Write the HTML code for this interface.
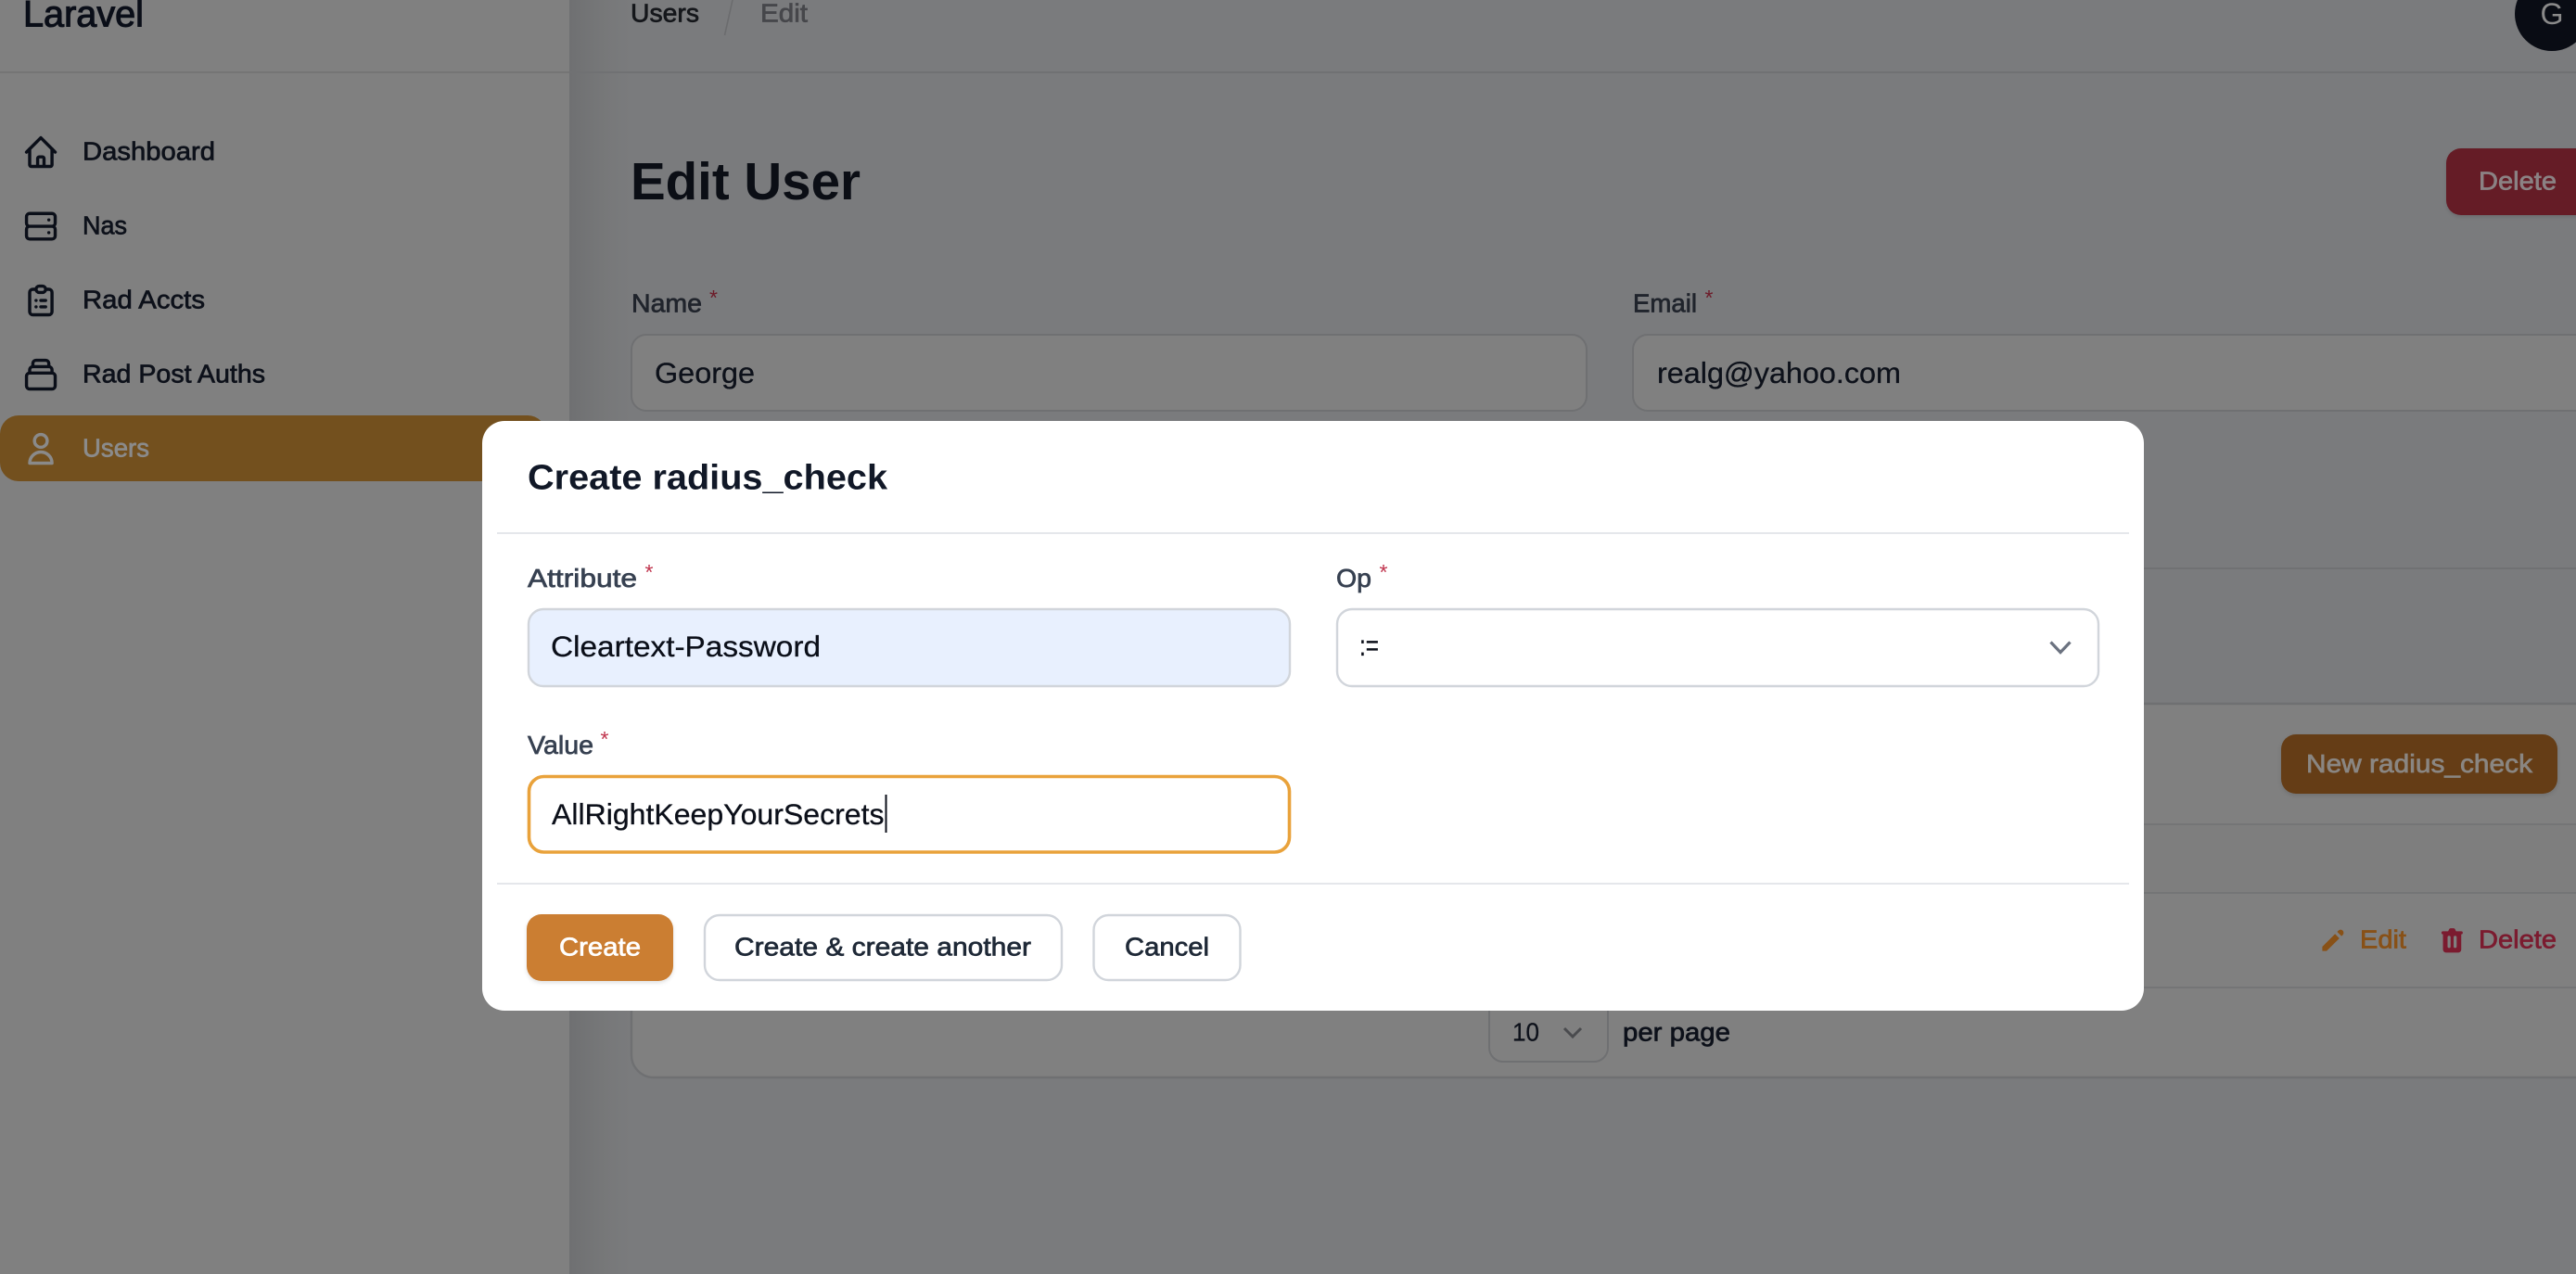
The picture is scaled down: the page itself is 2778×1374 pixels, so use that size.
<!DOCTYPE html>
<html lang="en">
<head>
<meta charset="utf-8">
<title>Edit User</title>
<style>
html,body{margin:0;padding:0;width:2778px;height:1374px;overflow:hidden;background:#7a7b7d}
svg{display:block}
text{font-family:"Liberation Sans",sans-serif;white-space:pre}
.m{stroke-width:.7px;stroke:currentColor}
.r{stroke-width:.3px;stroke:currentColor}
</style>
</head>
<body>
<svg xmlns="http://www.w3.org/2000/svg" width="2778" height="1374" viewBox="0 0 2778 1374">
<defs>
<linearGradient id="sh" x1="0" x2="1" y1="0" y2="0">
<stop offset="0" stop-color="#6f7072"/><stop offset=".6" stop-color="#777879"/><stop offset="1" stop-color="#7a7b7d"/>
</linearGradient>
<filter id="btn" x="-10%" y="-20%" width="120%" height="150%"><feDropShadow dx="0" dy="2" stdDeviation="2" flood-color="#000" flood-opacity=".12"/></filter>
</defs>

<!-- page -->
<rect width="2778" height="1374" fill="#7a7b7d"/>
<rect x="614" width="66" height="1374" fill="url(#sh)"/>

<!-- sidebar -->
<rect width="614" height="1374" fill="#808080"/>
<rect y="77" width="614" height="2" fill="#757575"/>
<rect x="614" y="77" width="2164" height="2" fill="#707173"/>
<text x="25" y="28.5" font-size="40" textLength="130" lengthAdjust="spacingAndGlyphs" fill="#0a0e18" stroke="#0a0e18" stroke-width="1.1">Laravel</text>

<rect x="0" y="448" width="589" height="71" rx="20" fill="#73501e"/>

<g fill="none" stroke="#0b0f19" stroke-width="2" stroke-linecap="round" stroke-linejoin="round">
<path transform="translate(23.4 143.4) scale(1.72)" d="M3 12l2-2m0 0l7-7 7 7M5 10v10a1 1 0 001 1h3m10-11l2 2m-2-2v10a1 1 0 01-1 1h-3m-6 0a1 1 0 001-1v-4a1 1 0 011-1h2a1 1 0 011 1v4a1 1 0 001 1m-6 0h6"/>
<path transform="translate(23.4 223.4) scale(1.72)" d="M5 12h14M5 12a2 2 0 01-2-2V6a2 2 0 012-2h14a2 2 0 012 2v4a2 2 0 01-2 2M5 12a2 2 0 00-2 2v4a2 2 0 002 2h14a2 2 0 002-2v-4a2 2 0 00-2-2m-2-4h.01M17 16h.01"/>
<path transform="translate(23.4 303.4) scale(1.72)" d="M9 5H7a2 2 0 00-2 2v12a2 2 0 002 2h10a2 2 0 002-2V7a2 2 0 00-2-2h-2M9 5a2 2 0 002 2h2a2 2 0 002-2M9 5a2 2 0 012-2h2a2 2 0 012 2m-3 7h3m-3 4h3m-6-4h.01M9 16h.01"/>
<path transform="translate(23.4 383.4) scale(1.72)" d="M19 11H5m14 0a2 2 0 012 2v6a2 2 0 01-2 2H5a2 2 0 01-2-2v-6a2 2 0 012-2m14 0V9a2 2 0 00-2-2M5 11V9a2 2 0 012-2m0 0V5a2 2 0 012-2h6a2 2 0 012 2v2M7 7h10"/>
<path stroke="#8a8a8a" transform="translate(23.4 463.4) scale(1.72)" d="M16 7a4 4 0 11-8 0 4 4 0 018 0zM12 14a7 7 0 00-7 7h14a7 7 0 00-7-7z"/>
</g>
<g font-size="27.5" fill="#0d111a" color="#0d111a">
<text class="m" x="89" y="172.5" textLength="143" lengthAdjust="spacingAndGlyphs">Dashboard</text>
<text class="m" x="89" y="252.5" textLength="48" lengthAdjust="spacingAndGlyphs">Nas</text>
<text class="m" x="89" y="332.5" textLength="132" lengthAdjust="spacingAndGlyphs">Rad Accts</text>
<text class="m" x="89" y="412.5" textLength="197" lengthAdjust="spacingAndGlyphs">Rad Post Auths</text>
<text class="m" x="89" y="492.5" textLength="72" lengthAdjust="spacingAndGlyphs" fill="#8b8b8b" color="#8b8b8b">Users</text>
</g>

<!-- breadcrumb -->
<text x="680" y="23.5" font-size="27.5" textLength="74" lengthAdjust="spacingAndGlyphs" fill="#15171b" color="#15171b" class="m">Users</text>
<path d="M790 0L781.5 38" stroke="#6b6c6e" stroke-width="1.6"/>
<text x="820" y="23.5" font-size="27.5" textLength="51" lengthAdjust="spacingAndGlyphs" fill="#46474b" color="#46474b" class="m">Edit</text>

<!-- avatar -->
<circle cx="2752" cy="15" r="40" fill="#090c14"/>
<text x="2739.5" y="26" font-size="32" textLength="25" lengthAdjust="spacingAndGlyphs" fill="#8a8a8a">G</text>

<!-- heading -->
<text x="680" y="215" font-size="57" font-weight="700" textLength="248" lengthAdjust="spacingAndGlyphs" fill="#0b0e15">Edit User</text>
<rect x="2638" y="160" width="180" height="72" rx="16" fill="#651b27" filter="url(#btn)"/>
<text class="m" x="2673" y="204.5" font-size="27.5" textLength="84" lengthAdjust="spacingAndGlyphs" fill="#8b8284" color="#8b8284">Delete</text>

<!-- user form -->
<text class="m" x="681" y="336.5" font-size="27.5" textLength="76" lengthAdjust="spacingAndGlyphs" fill="#20242c" color="#20242c">Name</text>
<text x="765" y="329" font-size="23" fill="#6d1a28">*</text>
<rect x="681" y="361" width="1030" height="82" rx="16" fill="#808080" stroke="#6f7072" stroke-width="2"/>
<text class="r" x="706" y="413" font-size="31.5" textLength="108" lengthAdjust="spacingAndGlyphs" fill="#0d111a" color="#0d111a">George</text>

<text class="m" x="1761" y="336.5" font-size="27.5" textLength="69" lengthAdjust="spacingAndGlyphs" fill="#20242c" color="#20242c">Email</text>
<text x="1838.5" y="329" font-size="23" fill="#6d1a28">*</text>
<rect x="1761" y="361" width="1060" height="82" rx="16" fill="#808080" stroke="#6f7072" stroke-width="2"/>
<text class="r" x="1787" y="413" font-size="31.5" textLength="263" lengthAdjust="spacingAndGlyphs" fill="#0d111a" color="#0d111a">realg@yahoo.com</text>

<rect x="2310" y="612" width="468" height="2" fill="#707173"/>

<!-- relation table card -->
<rect x="681" y="759" width="2140" height="403" rx="24" fill="#808080" stroke="#6f7072" stroke-width="2.4"/>
<rect x="682" y="889" width="2096" height="74" fill="#7e7e7e"/>
<rect x="682" y="888" width="2096" height="2" fill="#747576"/>
<rect x="682" y="962" width="2096" height="2" fill="#747576"/>
<rect x="682" y="1064" width="2096" height="2" fill="#747576"/>

<rect x="2460" y="792" width="298" height="64" rx="16" fill="#653e18" filter="url(#btn)"/>
<text class="m" x="2487" y="833" font-size="27.5" textLength="244" lengthAdjust="spacingAndGlyphs" fill="#8a8682" color="#8a8682">New radius_check</text>

<path transform="translate(2499.5 997.8) scale(1.64)" fill="#885117" d="M13.586 3.586a2 2 0 112.828 2.828l-.793.793-2.828-2.828.793-.793zM11.379 5.793L3 14.172V17h2.828l8.38-8.379-2.83-2.828z"/>
<text class="m" x="2545" y="1022.5" font-size="27.5" textLength="50" lengthAdjust="spacingAndGlyphs" fill="#885117" color="#885117">Edit</text>
<path transform="translate(2628 997.8) scale(1.64)" fill="#7b1b2f" fill-rule="evenodd" d="M9 2a1 1 0 00-.894.553L7.382 4H4a1 1 0 000 2v10a2 2 0 002 2h8a2 2 0 002-2V6a1 1 0 100-2h-3.382l-.724-1.447A1 1 0 0011 2H9zM7 8a1 1 0 012 0v6a1 1 0 11-2 0V8zm5-1a1 1 0 00-1 1v6a1 1 0 102 0V8a1 1 0 00-1-1z"/>
<text class="m" x="2673" y="1022.5" font-size="27.5" textLength="84" lengthAdjust="spacingAndGlyphs" fill="#7b1b2f" color="#7b1b2f">Delete</text>

<rect x="1606" y="1070" width="128" height="75" rx="15" fill="#808080" stroke="#6f7072" stroke-width="2"/>
<text class="r" x="1631" y="1122.5" font-size="27.5" textLength="29" lengthAdjust="spacingAndGlyphs" fill="#0d111a" color="#0d111a">10</text>
<path d="M1687 1109L1696 1118L1705 1109" fill="none" stroke="#4a4b4e" stroke-width="3"/>
<text class="m" x="1750" y="1122.5" font-size="27.5" textLength="116" lengthAdjust="spacingAndGlyphs" fill="#0d111a" color="#0d111a">per page</text>

<!-- modal -->
<rect x="520" y="454" width="1792" height="636" rx="24" fill="#fff"/>
<rect x="536" y="574" width="1760" height="2" fill="#e5e7eb"/>
<rect x="536" y="952" width="1760" height="2" fill="#e5e7eb"/>
<text x="569" y="527.5" font-size="38" font-weight="700" textLength="388" lengthAdjust="spacingAndGlyphs" fill="#111827">Create radius_check</text>

<text class="m" x="569" y="633" font-size="27.5" textLength="118" lengthAdjust="spacingAndGlyphs" fill="#374151" color="#374151">Attribute</text>
<text x="695.5" y="625" font-size="23" fill="#c0344d">*</text>
<rect x="570" y="657" width="821" height="83" rx="16" fill="#e8f0fe" stroke="#d1d5db" stroke-width="2.4"/>
<text class="r" x="594" y="708" font-size="31.5" textLength="291" lengthAdjust="spacingAndGlyphs" fill="#0b0f19" color="#0b0f19">Cleartext-Password</text>

<text class="m" x="1441" y="633" font-size="27.5" textLength="38" lengthAdjust="spacingAndGlyphs" fill="#374151" color="#374151">Op</text>
<text x="1487.5" y="625" font-size="23" fill="#c0344d">*</text>
<rect x="1442" y="657" width="821" height="83" rx="16" fill="#fff" stroke="#d1d5db" stroke-width="2.4"/>
<text class="r" x="1466" y="707" font-size="31.5" textLength="21" lengthAdjust="spacingAndGlyphs" fill="#0b0f19" color="#0b0f19">:=</text>
<path d="M2211.5 692.5L2222 703.5L2232.5 692.5" fill="none" stroke="#6b7280" stroke-width="3.2"/>

<text class="m" x="569" y="813" font-size="27.5" textLength="71" lengthAdjust="spacingAndGlyphs" fill="#374151" color="#374151">Value</text>
<text x="647.5" y="805" font-size="23" fill="#c0344d">*</text>
<rect x="570.5" y="837.5" width="820" height="81.5" rx="16" fill="#fff" stroke="#e9a23b" stroke-width="3.6"/>
<text class="r" x="595" y="889" font-size="31.5" textLength="358.5" lengthAdjust="spacingAndGlyphs" fill="#0b0f19" color="#0b0f19">AllRightKeepYourSecrets</text>
<rect x="954.5" y="857" width="2" height="41" fill="#0b0f19"/>

<rect x="568" y="986" width="158" height="72" rx="16" fill="#cb7e31" filter="url(#btn)"/>
<text class="m" x="603" y="1030.5" font-size="27.5" textLength="88" lengthAdjust="spacingAndGlyphs" fill="#fff" color="#fff">Create</text>
<rect x="760" y="987" width="385" height="70" rx="16" fill="#fff" stroke="#d1d5db" stroke-width="2.4"/>
<text class="m" x="792" y="1030.5" font-size="27.5" textLength="320" lengthAdjust="spacingAndGlyphs" fill="#1f2937" color="#1f2937">Create &amp; create another</text>
<rect x="1179.5" y="987" width="158" height="70" rx="16" fill="#fff" stroke="#d1d5db" stroke-width="2.4"/>
<text class="m" x="1213" y="1030.5" font-size="27.5" textLength="91" lengthAdjust="spacingAndGlyphs" fill="#1f2937" color="#1f2937">Cancel</text>
</svg>
</body>
</html>
